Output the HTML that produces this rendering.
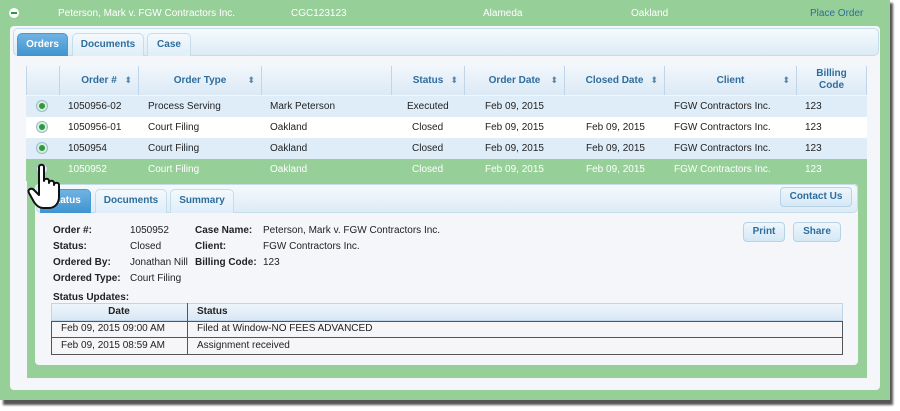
<!DOCTYPE html>
<html><head><style>
*{box-sizing:border-box;margin:0;padding:0}
body{width:900px;height:411px;background:#fff;font-family:"Liberation Sans",sans-serif;font-size:10px;color:#222;position:relative;overflow:hidden}
.a{position:absolute}
.g{background:#96cf98}
.t{white-space:nowrap}
.hdr{color:#fff;top:8px}
.tab{position:absolute;border:1px solid #c5dceb;border-bottom:none;border-radius:5px 5px 0 0;background:linear-gradient(#f4f9fd,#dfeef8);color:#2e6d9c;font-weight:bold;text-align:center;line-height:22px}
.tab.on{background:linear-gradient(#6fb3e3,#3f94d0);color:#fff;border-color:#4a9ad2}
.th{position:absolute;top:66px;height:29px;background:linear-gradient(#f1f7fc,#dbe9f5);border-right:1px solid #c0d6e8;color:#2e6d9c;font-weight:bold;text-align:center;line-height:29px}
.th .s{position:absolute;right:6px;top:0;font-size:9px;color:#5a87a8;font-weight:normal}
.row{position:absolute;left:26px;width:841px;height:21px;line-height:21px}
.row span{position:absolute}
.ic{width:10px;height:10px;border-radius:50%;background:#2b9b3e;border:2px solid #d9eedb;top:5px;left:11px;box-shadow:0 0 0 1px #9bc}
.btn{position:absolute;border:1px solid #b8d3e6;border-radius:4px;background:linear-gradient(#eef6fc,#d6e8f6);color:#2e6d9c;font-weight:bold;text-align:center;line-height:18px}
.lb{font-weight:bold}
</style></head><body>
<div class="a" style="left:3px;top:3px;width:890px;height:402px;background:#555;filter:blur(1px)"></div>
<div class="a g" style="left:0;top:0;width:890px;height:400px"></div>
<div class="a" style="left:9px;top:8px;width:10px;height:10px;border-radius:50%;background:#fff"></div>
<div class="a" style="left:11px;top:12px;width:6px;height:2px;background:#2b9b3e"></div>
<div class="a t hdr" style="left:58px">Peterson, Mark v. FGW Contractors Inc.</div>
<div class="a t hdr" style="left:291px">CGC123123</div>
<div class="a t hdr" style="left:483px">Alameda</div>
<div class="a t hdr" style="left:631px">Oakland</div>
<div class="a t" style="left:810px;top:8px;color:#2e6d9c">Place Order</div>
<div class="a" style="left:10px;top:26px;width:870px;height:364px;background:#f4f6f9;border-radius:4px"></div>
<div class="a" style="left:13px;top:28px;width:866px;height:28px;border:1px solid #c5dceb;border-radius:5px;background:linear-gradient(#f6fafd,#dcebf6)"></div>
<div class="tab on" style="left:17px;top:33px;width:51px;height:23px">Orders</div>
<div class="tab" style="left:72px;top:33px;width:72px;height:23px">Documents</div>
<div class="tab" style="left:147px;top:33px;width:44px;height:23px">Case</div>

<div class="th" style="left:26px;width:34px;border-left:1px solid #c0d6e8"></div>
<div class="th" style="left:60px;width:79px">Order #<span class="s">⬍</span></div>
<div class="th" style="left:139px;width:123px">Order Type<span class="s">⬍</span></div>
<div class="th" style="left:262px;width:130px"></div>
<div class="th" style="left:392px;width:73px">Status<span class="s">⬍</span></div>
<div class="th" style="left:465px;width:100px">Order Date<span class="s">⬍</span></div>
<div class="th" style="left:565px;width:100px">Closed Date<span class="s">⬍</span></div>
<div class="th" style="left:665px;width:132px">Client<span class="s">⬍</span></div>
<div class="th" style="left:797px;width:70px;line-height:12px;padding-top:2px">Billing<br>Code</div>

<div class="row" style="top:96px;background:#dfedf8"><i class="a ic"></i><span style="left:42px">1050956-02</span><span style="left:122px">Process Serving</span><span style="left:244px">Mark Peterson</span><span style="left:381px">Executed</span><span style="left:459px">Feb 09, 2015</span><span style="left:648px">FGW Contractors Inc.</span><span style="left:779px">123</span></div>
<div class="row" style="top:117px;background:#fff"><i class="a ic"></i><span style="left:42px">1050956-01</span><span style="left:122px">Court Filing</span><span style="left:244px">Oakland</span><span style="left:386px">Closed</span><span style="left:459px">Feb 09, 2015</span><span style="left:560px">Feb 09, 2015</span><span style="left:648px">FGW Contractors Inc.</span><span style="left:779px">123</span></div>
<div class="row" style="top:138px;background:#dfedf8"><i class="a ic"></i><span style="left:42px">1050954</span><span style="left:122px">Court Filing</span><span style="left:244px">Oakland</span><span style="left:386px">Closed</span><span style="left:459px">Feb 09, 2015</span><span style="left:560px">Feb 09, 2015</span><span style="left:648px">FGW Contractors Inc.</span><span style="left:779px">123</span></div>
<div class="row g" style="top:159px;color:#fff;height:22px"><i class="a ic"></i><span style="left:42px">1050952</span><span style="left:122px">Court Filing</span><span style="left:244px">Oakland</span><span style="left:386px">Closed</span><span style="left:459px">Feb 09, 2015</span><span style="left:560px">Feb 09, 2015</span><span style="left:648px">FGW Contractors Inc.</span><span style="left:779px">123</span></div>
<div class="a g" style="left:27px;top:180px;width:840px;height:198px"></div>
<div class="a" style="left:35px;top:184px;width:823px;height:181px;background:#f4f6f9;border-radius:4px"></div>
<div class="a" style="left:36px;top:184px;width:822px;height:29px;border:1px solid #c5dceb;border-radius:5px;background:linear-gradient(#f6fafd,#dcebf6)"></div>
<div class="tab on" style="left:40px;top:189px;width:51px;height:24px">Status</div>
<div class="tab" style="left:95px;top:189px;width:72px;height:24px">Documents</div>
<div class="tab" style="left:170px;top:189px;width:64px;height:24px">Summary</div>
<div class="btn" style="left:780px;top:187px;width:72px;height:20px">Contact Us</div>
<div class="btn" style="left:743px;top:222px;width:42px;height:20px">Print</div>
<div class="btn" style="left:793px;top:222px;width:48px;height:20px">Share</div>

<div class="a t lb" style="left:53px;top:225px">Order #:</div><div class="a t" style="left:130px;top:225px">1050952</div>
<div class="a t lb" style="left:53px;top:241px">Status:</div><div class="a t" style="left:130px;top:241px">Closed</div>
<div class="a t lb" style="left:53px;top:257px">Ordered By:</div><div class="a t" style="left:130px;top:257px">Jonathan Nill</div>
<div class="a t lb" style="left:53px;top:273px">Ordered Type:</div><div class="a t" style="left:130px;top:273px">Court Filing</div>
<div class="a t lb" style="left:195px;top:225px">Case Name:</div><div class="a t" style="left:263px;top:225px">Peterson, Mark v. FGW Contractors Inc.</div>
<div class="a t lb" style="left:195px;top:241px">Client:</div><div class="a t" style="left:263px;top:241px">FGW Contractors Inc.</div>
<div class="a t lb" style="left:195px;top:257px">Billing Code:</div><div class="a t" style="left:263px;top:257px">123</div>
<div class="a t lb" style="left:53px;top:292px">Status Updates:</div>

<div class="a" style="left:51px;top:303px;width:792px;height:18px;background:linear-gradient(#eef5fb,#d9e8f5);border:1px solid #c0d6e8"></div>
<div class="a lb" style="left:51px;top:306px;width:136px;text-align:center">Date</div>
<div class="a lb" style="left:197px;top:306px">Status</div>
<div class="a" style="left:51px;top:321px;width:792px;height:34px;border:1px solid #555;background:#f6f6f8"></div>
<div class="a" style="left:51px;top:337px;width:792px;height:1px;background:#555"></div>
<div class="a" style="left:187px;top:303px;width:1px;height:52px;background:#555"></div>
<div class="a t" style="left:61px;top:323px">Feb 09, 2015 09:00 AM</div>
<div class="a t" style="left:197px;top:323px">Filed at Window-NO FEES ADVANCED</div>
<div class="a t" style="left:61px;top:340px">Feb 09, 2015 08:59 AM</div>
<div class="a t" style="left:197px;top:340px">Assignment received</div>

<svg class="a" style="left:27px;top:163px" width="42" height="50" viewBox="0 0 42 48"><path d="M12 3c0-3 5-3 5 0v14c0-3 5-3 5 0v2c0-3 5-3 5 0v2c0-3 5-3 5 0v12c0 6-4 11-10 11h-6c-4 0-7-3-9-6L2 29c-2-3 2-6 5-3l5 5z" fill="#fff" stroke="#111" stroke-width="2" stroke-linejoin="round"/></svg>
</body></html>
